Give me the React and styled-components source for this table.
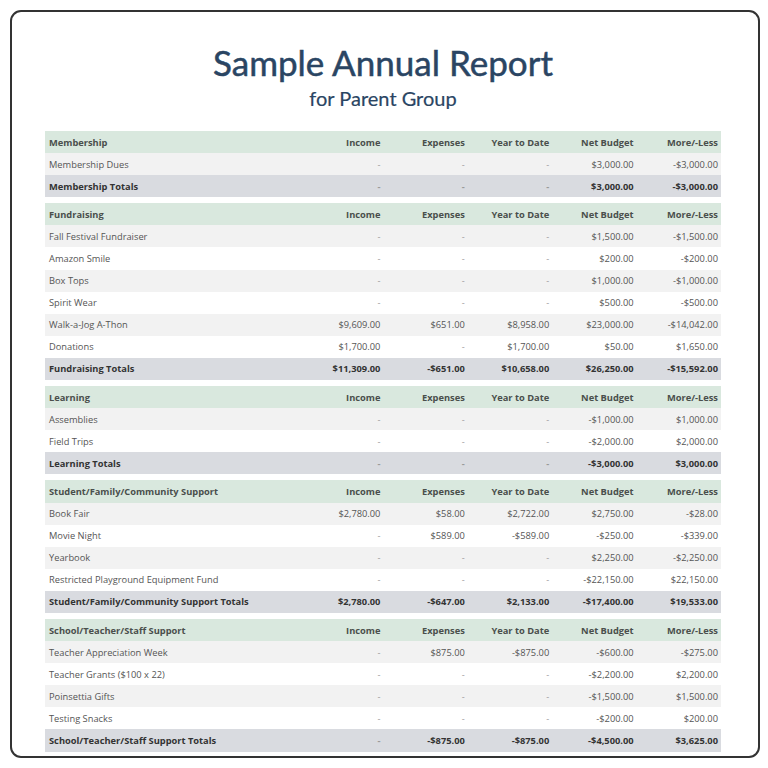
import React from 'react'
import styled, { createGlobalStyle } from 'styled-components'

const GlobalStyle = createGlobalStyle`
  html, body {
    margin: 0;
    padding: 0;
    background: #ffffff;
  }
  body {
    font-family: "Open Sans", "Liberation Sans", sans-serif;
  }
`

const COLS = ['Income', 'Expenses', 'Year to Date', 'Net Budget', 'More/-Less']

const sections = [
  {
    name: 'Membership',
    rows: [['Membership Dues', '-', '-', '-', '$3,000.00', '-$3,000.00']],
    totals: ['-', '-', '-', '$3,000.00', '-$3,000.00'],
  },
  {
    name: 'Fundraising',
    rows: [
      ['Fall Festival Fundraiser', '-', '-', '-', '$1,500.00', '-$1,500.00'],
      ['Amazon Smile', '-', '-', '-', '$200.00', '-$200.00'],
      ['Box Tops', '-', '-', '-', '$1,000.00', '-$1,000.00'],
      ['Spirit Wear', '-', '-', '-', '$500.00', '-$500.00'],
      ['Walk-a-Jog A-Thon', '$9,609.00', '$651.00', '$8,958.00', '$23,000.00', '-$14,042.00'],
      ['Donations', '$1,700.00', '-', '$1,700.00', '$50.00', '$1,650.00'],
    ],
    totals: ['$11,309.00', '-$651.00', '$10,658.00', '$26,250.00', '-$15,592.00'],
  },
  {
    name: 'Learning',
    rows: [
      ['Assemblies', '-', '-', '-', '-$1,000.00', '$1,000.00'],
      ['Field Trips', '-', '-', '-', '-$2,000.00', '$2,000.00'],
    ],
    totals: ['-', '-', '-', '-$3,000.00', '$3,000.00'],
  },
  {
    name: 'Student/Family/Community Support',
    rows: [
      ['Book Fair', '$2,780.00', '$58.00', '$2,722.00', '$2,750.00', '-$28.00'],
      ['Movie Night', '-', '$589.00', '-$589.00', '-$250.00', '-$339.00'],
      ['Yearbook', '-', '-', '-', '$2,250.00', '-$2,250.00'],
      ['Restricted Playground Equipment Fund', '-', '-', '-', '-$22,150.00', '$22,150.00'],
    ],
    totals: ['$2,780.00', '-$647.00', '$2,133.00', '-$17,400.00', '$19,533.00'],
  },
  {
    name: 'School/Teacher/Staff Support',
    rows: [
      ['Teacher Appreciation Week', '-', '$875.00', '-$875.00', '-$600.00', '-$275.00'],
      ['Teacher Grants ($100 x 22)', '-', '-', '-', '-$2,200.00', '$2,200.00'],
      ['Poinsettia Gifts', '-', '-', '-', '-$1,500.00', '$1,500.00'],
      ['Testing Snacks', '-', '-', '-', '-$200.00', '$200.00'],
    ],
    totals: ['-', '-$875.00', '-$875.00', '-$4,500.00', '$3,625.00'],
  },
]

const Card = styled.div`
  box-sizing: border-box;
  margin: 10px;
  width: 750px;
  height: 748px;
  border: 2px solid #333333;
  border-radius: 11px;
  background: #ffffff;
  padding: 0 37px 0 33px;
  display: flex;
  flex-direction: column;
  align-items: stretch;
`

const Title = styled.h1`
  margin: 29px 0 0;
  text-align: center;
  font-family: Lato, "Open Sans", sans-serif;
  font-weight: 400;
  font-size: 35px;
  line-height: 42px;
  color: #2a4563;
  -webkit-text-stroke: 0.5px #2a4563;
`

const Subtitle = styled.h2`
  margin: 2px 0 0;
  text-align: center;
  font-family: Lato, "Open Sans", sans-serif;
  font-weight: 400;
  font-size: 20px;
  line-height: 26px;
  color: #2a4563;
  -webkit-text-stroke: 0.2px #2a4563;
`

const Report = styled.div`
  margin-top: 20px;
  display: flex;
  flex-direction: column;
  gap: 6px;
`

const Section = styled.div`
  display: flex;
  flex-direction: column;
`

const Row = styled.div`
  display: grid;
  grid-template-columns: 1fr repeat(5, 84.4px);
  height: 22.1px;
  align-items: center;
  font-family: "Open Sans", sans-serif;
  font-size: 9.3px;
  background: ${ props => props.kind === 'head' ? '#d9e8de'
    : props.kind === 'total' ? '#d9dbe0'
    : props.shaded ? '#f2f2f2' : '#ffffff' };
  font-weight: ${ props => (props.kind === 'head' || props.kind === 'total') ? 700 : 400 };
  color: ${ props => props.kind === 'head' ? '#4a4f4c'
    : props.kind === 'total' ? '#333333' : '#555555' };
`

const Label = styled.div`
  padding-left: 4px;
  white-space: nowrap;
`

const Cell = styled.div`
  text-align: right;
  padding-right: 3px;
  white-space: nowrap;
  color: ${ props => props.dash ? '#9a9a9a' : 'inherit' };
`

function ReportSection({ section }) {
  return (
    <Section>
      <Row kind="head">
        <Label>{ section.name }</Label>
        { COLS.map(c => <Cell key={ c }>{ c }</Cell>) }
      </Row>
      { section.rows.map((r, i) => (
        <Row key={ r[0] } shaded={ i % 2 === 0 }>
          <Label>{ r[0] }</Label>
          { r.slice(1).map((v, j) => <Cell key={ j } dash={ v === '-' }>{ v }</Cell>) }
        </Row>
      )) }
      <Row kind="total">
        <Label>{ section.name } Totals</Label>
        { section.totals.map((v, j) => <Cell key={ j } dash={ v === '-' }>{ v }</Cell>) }
      </Row>
    </Section>
  )
}

export default function App() {
  return (
    <>
      <GlobalStyle />
      <Card>
        <Title>Sample Annual Report</Title>
        <Subtitle>for Parent Group</Subtitle>
        <Report>
          { sections.map(s => <ReportSection key={ s.name } section={ s } />) }
        </Report>
      </Card>
    </>
  )
}
